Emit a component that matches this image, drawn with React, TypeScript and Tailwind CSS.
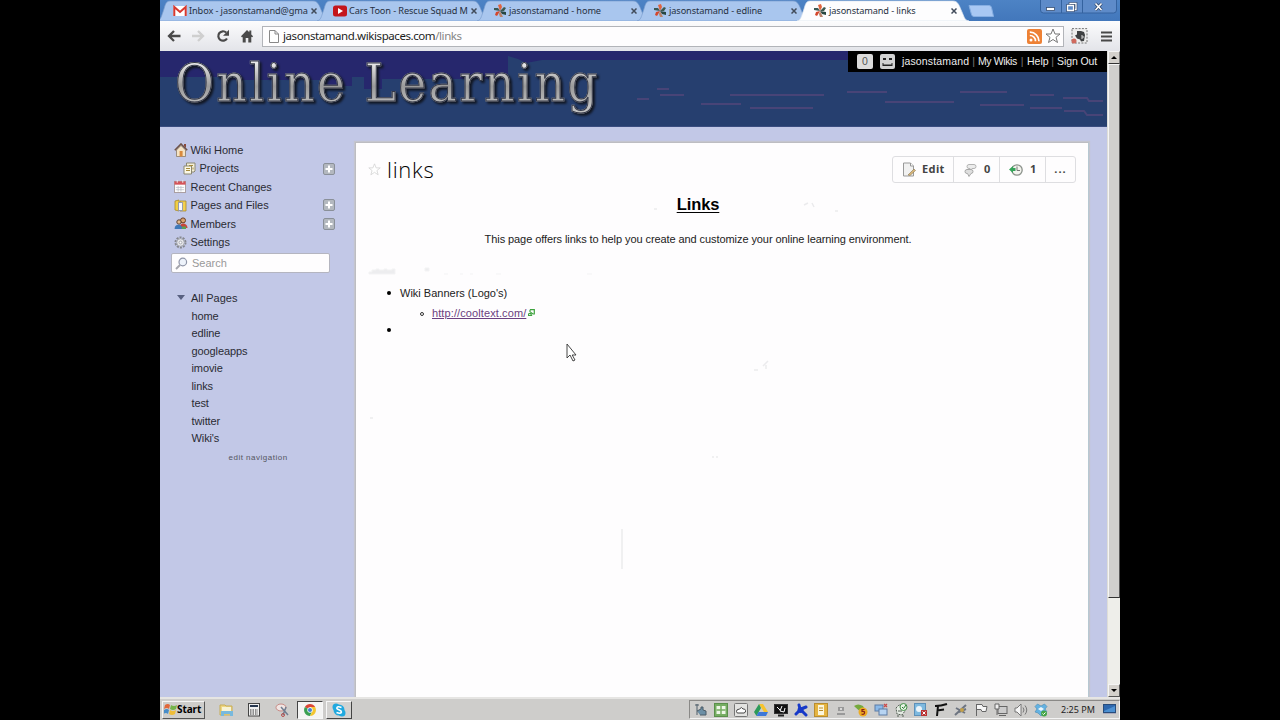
import type { ReactNode } from 'react'

interface TabProps {
    title: string
    icon: ReactNode
    active?: boolean
}

// Icons
const PinwheelIcon = () => (
    <svg className="h-[14px] w-[14px] shrink-0" viewBox="0 0 14 14">
        <path d="M7 7 5 1l3-1 1 3Z" fill="#e0653f" />
        <path d="M7 7l4-4 2 1-2 3Z" fill="#3c5a50" />
        <path d="M7 7l6 1 0 3-4-1Z" fill="#27463f" />
        <path d="M7 7l3 6-3 0-1-3Z" fill="#b9826a" />
        <path d="M7 7l-3 5-2-1 1-3Z" fill="#d4472c" />
        <path d="M7 7 1 6l0-2 4 0Z" fill="#3a5a55" />
    </svg>
)

const GmailIcon = () => (
    <svg className="h-[14px] w-[14px] shrink-0" viewBox="0 0 14 14">
        <rect x="0.5" y="2" width="13" height="10" fill="#fff" />
        <path d="M1.3 12V3l5.7 5 5.7-5v9" fill="none" stroke="#d8392f" strokeWidth="2" />
    </svg>
)

const YoutubeIcon = () => (
    <svg className="h-[14px] w-[14px] shrink-0" viewBox="0 0 14 14">
        <rect x="0" y="1.5" width="14" height="11" rx="2.5" fill="#c4161c" />
        <path d="M5 4v6l5-3Z" fill="#fff" />
    </svg>
)

const HouseIcon = () => (
    <svg className="h-[14px] w-[14px]" viewBox="0 0 14 14">
        <path d="M2.5 7v6.5h9V7L7 2.5Z" fill="#f4e3c4" stroke="#8a7a66" strokeWidth="0.8" />
        <path d="M10 1h2v4l-2-2Z" fill="#8a4a3a" />
        <path d="M.8 7.3 7 1l6.2 6.3" fill="none" stroke="#6e5348" strokeWidth="1.6" />
        <rect x="5.6" y="8" width="3" height="5.5" fill="#d98a3d" />
    </svg>
)

const ProjectsIcon = () => (
    <svg className="h-[13px] w-[13px]" viewBox="0 0 13 13">
        <path d="M3.5 1h8.5v8l-1 1H3.5Z" fill="#f3efd9" stroke="#8b8770" />
        <path d="M1 4h7.5v8H1Z" fill="#fbf8e6" stroke="#8b8770" />
        <path d="M3 6.5h4M3 8.5h4M6 3.5h4M10 5.5v2" stroke="#a98d3d" />
    </svg>
)

const CalendarIcon = () => (
    <svg className="h-[13px] w-[12px]" viewBox="0 0 13 14">
        <rect x="0.5" y="1.5" width="12" height="12" fill="#fdfdfd" stroke="#a69a9c" />
        <rect x="0.5" y="1.5" width="12" height="3.5" fill="#d4535a" />
        <path d="M3.5 0v3M9.5 0v3" stroke="#eee" />
        <path d="M2 8h9M2 10.5h9M4.5 6.5v6M7.5 6.5v6" stroke="#b9bcc4" strokeWidth="0.8" />
    </svg>
)

const FilesIcon = () => (
    <svg className="h-[13px] w-[13px]" viewBox="0 0 13 13">
        <path d="M1 2l4-1v11l-4-1Z" fill="#f0cf45" stroke="#a98c28" strokeWidth="0.8" />
        <path d="M6 2h6v10H6Z" fill="#f3d050" stroke="#a98c28" strokeWidth="0.8" />
        <path d="M4.5 3.5h4v8h-4Z" fill="#f7f8fd" stroke="#7f8bb0" strokeWidth="0.8" />
    </svg>
)

const MembersIcon = () => (
    <svg className="h-[13px] w-[14px]" viewBox="0 0 14 13">
        <circle cx="9" cy="3.4" r="2.5" fill="#d9a273" stroke="#6b3f22" strokeWidth="1" />
        <path d="M5.5 11c0-3 1.5-4.5 3.7-4.5S13.5 8 13.5 11Z" fill="#c8443a" />
        <circle cx="5" cy="5" r="2.2" fill="#e5b98c" stroke="#5a4030" strokeWidth="1" />
        <path d="M.6 12c0-3 1.6-4.3 3.8-4.3S8.3 9 8.3 12Z" fill="#3f78b8" />
        <path d="M8 9.5h4v2.5H8Z" fill="#5aa05a" />
    </svg>
)

const GearIcon = () => (
    <svg className="h-[13px] w-[13px]" viewBox="0 0 13 13">
        <circle cx="6.5" cy="6.5" r="5" fill="none" stroke="#85878d" strokeWidth="2" strokeDasharray="2 1.14" />
        <circle cx="6.5" cy="6.5" r="3.8" fill="#e4e5e9" stroke="#9a9da3" strokeWidth="0.8" />
        <circle cx="6.5" cy="6.5" r="1.4" fill="#fbfbfd" stroke="#9a9da3" strokeWidth="0.8" />
    </svg>
)

const SearchIcon = () => (
    <svg className="h-[13px] w-[13px]" viewBox="0 0 13 13">
        <path d="M1 12l4-4" stroke="#a6a6ae" strokeWidth="2" />
        <circle cx="7.8" cy="5" r="3.8" fill="#eef3fb" stroke="#8f95a8" strokeWidth="1.2" />
    </svg>
)

const PlusButton = () => (
    <svg className="h-3 w-3" viewBox="0 0 12 12">
        <rect x="0.5" y="0.5" width="11" height="11" rx="1.5" fill="#b3b8bf" stroke="#8a9099" />
        <path d="M6 2.5v7M2.5 6h7" stroke="#fff" strokeWidth="2" />
    </svg>
)

const WindowButtons = () => (
    <svg className="h-[14px] w-[77px]" viewBox="0 0 77 14">
        <path d="M.5 0v10q0 3 3 3h70q3 0 3-3V0" fill="#5e8bc9" stroke="#34629f" />
        <path d="M21.5 0v13M42.5 0v13" stroke="#34629f" />
        <rect x="6.5" y="7.5" width="8" height="3" fill="#fff" stroke="#3a4f72" strokeWidth="0.8" />
        <path d="M30 3.5h6v6h-6Z" fill="none" stroke="#2c4265" strokeWidth="2.6" />
        <path d="M30 3.5h6v6h-6Z" fill="none" stroke="#fff" strokeWidth="1.3" />
        <path d="M27.5 5.5h6v5h-6Z" fill="#5e8bc9" stroke="#2c4265" strokeWidth="2.6" />
        <path d="M27.5 5.5h6v5h-6Z" fill="#5e8bc9" stroke="#fff" strokeWidth="1.3" />
        <path d="M55.5 3.5l6 6.5M61.5 3.5l-6 6.5" stroke="#2c4265" strokeWidth="3" />
        <path d="M55.5 3.5l6 6.5M61.5 3.5l-6 6.5" stroke="#fff" strokeWidth="1.6" />
    </svg>
)

const StarIcon = ({ className }: { className: string }) => (
    <svg className={className} viewBox="0 0 16 16" fill="#fff" stroke="currentColor" strokeLinejoin="round">
        <path d="M8 1l2 5h5l-4 3.3 1.5 5.2L8 11.5l-4.5 3L5 9.3 1 6h5Z" />
    </svg>
)

const RssIcon = () => (
    <svg className="h-[15px] w-[15px]" viewBox="0 0 15 15">
        <rect width="15" height="15" rx="2" fill="#ee8135" />
        <circle cx="4" cy="11" r="1.5" fill="#fff" />
        <path d="M2.8 6.5a5.5 5.5 0 0 1 5.7 5.8M2.8 3.2a9 9 0 0 1 9.2 9.1" fill="none" stroke="#fff" strokeWidth="1.7" />
    </svg>
)

const EvernoteIcon = () => (
    <svg className="h-[16px] w-[17px]" viewBox="0 0 17 16">
        <rect x="1" y="0.6" width="15" height="14.4" fill="#eee" stroke="#777" strokeDasharray="2 1.3" />
        <path d="M6 3h4l3 1 1 3-1 6-3 .5-1-2-3-1-2-3 2-1Z" fill="#3f4143" />
        <path d="M10 8h2v2h-2" fill="none" stroke="#d8d8d8" />
        <circle cx="3" cy="13" r="2.5" fill="#d06a5e" />
    </svg>
)

const ToolbarNav = () => (
    <svg className="h-[14px] w-[88px]" viewBox="0 0 88 14">
        <path d="M14.500 7H3M8 2 3 7l5 5" fill="none" stroke="#4a4a4a" strokeWidth="2.300" />
        <path d="M26 7h11M32 2l5 5-5 5" fill="none" stroke="#cfcfcf" strokeWidth="2.300" />
        <path d="M61 9.5a4.700 4.700 0 1 1-.8-6" fill="none" stroke="#4a4a4a" strokeWidth="2.200" />
        <path d="M63 .8v6h-6Z" fill="#4a4a4a" />
        <path d="M75 7.300 81 1l2.300 2.300V1.500h2v4l1.800 1.800-1 1-.8-.5V13.500h-3V9h-2.600v4.500h-3V7.800l-.6.6Z" fill="#4a4a4a" />
    </svg>
)

const Tab = ({ title, icon, active }: TabProps) => (
    <div className="relative flex h-[21px] w-[160px] shrink-0 items-center pl-[13px] pt-[1px]">
        <svg className="absolute -left-[4px] top-0 h-[21px] w-[174px]" viewBox="0 0 174 21">
            <path
                d="M1 21C5 20 5 17 7 12S9 1 14 1H157C162 1 163 5 166 12S169 20 173 21Z"
                fill={active ? '#fdfdfe' : '#a9c6ee'}
                stroke={active ? '#d8e2ef' : '#7c9fce'}
                strokeWidth="0.7"
            />
        </svg>
        <div className="relative flex items-center">
            {icon}
            <span className="ml-[2px] w-[119px] whitespace-nowrap font-['Noto_Sans','Liberation_Sans',sans-serif] text-[9.2px] leading-4 tracking-[-0.1px] text-[#26303f]">
                {title}
            </span>
            <svg className="ml-[3px] h-[6px] w-[6px]" viewBox="0 0 6 6">
                <path d="M.5.5l5 5M5.5.5l-5 5" stroke="#424c5b" strokeWidth="1.500" />
            </svg>
        </div>
    </div>
)

const TabStrip = () => (
    <div className="flex h-[21px] justify-between overflow-hidden bg-linear-to-b from-[#4d83c5] to-[#4277bb]">
        <div className="flex">
            <Tab title="Inbox - jasonstamand@gma" icon={<GmailIcon />} />
            <Tab title="Cars Toon - Rescue Squad M" icon={<YoutubeIcon />} />
            <Tab title="jasonstamand - home" icon={<PinwheelIcon />} />
            <Tab title="jasonstamand - edline" icon={<PinwheelIcon />} />
            <Tab title="jasonstamand - links" icon={<PinwheelIcon />} active />
            <svg className="ml-[8px] mt-[5px] h-[12px] w-[26px]" viewBox="0 0 26 12">
                <path d="M1 .5h20q2 0 2.5 2l2 9H6q-2 0-2.5-2Z" fill="#a9c8f3" stroke="#86aee2" />
            </svg>
        </div>
        <div className="pr-[3px]">
            <WindowButtons />
        </div>
    </div>
)

const AddressBar = () => (
    <div className="flex h-[30px] items-center bg-linear-to-b from-[#fcfcfd] to-[#e3e4e9] pl-[6px]">
        <ToolbarNav />
        <div className="ml-[8px] flex h-[21px] w-[802px] items-center border border-[#b2b4b9] bg-[#fefdfe] pl-[6px]">
            <svg className="h-[13px] w-[10px]" viewBox="0 0 10 13">
                <path d="M.5.5h5.5l3.5 3.5v8.500h-9ZM6 .5V4h3.500" fill="#fff" stroke="#888" />
            </svg>
            <span className="ml-[4px] whitespace-nowrap font-['Noto_Sans',sans-serif] text-[11.5px] tracking-[-0.420px] text-[#1d1d1d]">
                jasonstamand.wikispaces.com<span className="text-[#858585]">/links</span>
            </span>
            <div className="ml-auto flex items-center gap-[3px] pr-[2px]">
                <RssIcon />
                <StarIcon className="h-[16px] w-[16px] text-[#777]" />
            </div>
        </div>
        <div className="ml-[7px] mt-[-1px]">
            <EvernoteIcon />
        </div>
        <svg className="ml-[13px] h-[11px] w-[11px]" viewBox="0 0 11 11">
            <path d="M0 1.5h11M0 5.5h11M0 9.5h11" stroke="#484848" strokeWidth="2.2" />
        </svg>
    </div>
)

const Banner = () => (
    <header className="relative h-[76px] w-full shrink-0 overflow-hidden border-b border-[#3a4d80] bg-[#263f6f]">
        <svg className="absolute inset-0 h-[75px] w-[947px]" viewBox="0 0 947 75">
            <path d="M0 0H688V9H382L366 12 358 8 348 5V28H222V38H204V26H192V35H160V29H66V26H0Z" fill="#26276d" />
            <path
                d="M497 38h12M477 48h12M500 44h24M570 44h94M541 53h40M590 57h63M687 41h40M725 51h69M800 41h47M820 54h44M870 44h24M870 57h32M903 47h24l2 3h14M904 60h20l3 4h16"
                fill="none"
                stroke="#484477"
                strokeWidth="2"
            />
        </svg>
        <h1 className="relative ml-[15px] mt-[-1px] w-fit whitespace-nowrap bg-linear-to-b from-[#e8e8e8] from-20% via-[#9a9a9a] via-55% to-[#c0c0c0] to-85% bg-clip-text font-['DejaVu_Serif_Condensed','DejaVu_Serif',serif] text-[53px] leading-[66px] tracking-[2.150px] text-transparent drop-shadow-[2px_2px_1px_#111622] [-webkit-text-stroke:1px_#343848] [font-stretch:75%]">
            Online Learning
        </h1>
        <div className="absolute right-0 top-0 flex h-[21px] w-[259px] items-center bg-black pl-[9px] font-['Liberation_Sans',sans-serif] text-[10.5px] text-[#eeeeee]">
            <span className="flex h-[15px] w-[16px] items-center justify-center rounded-[2px] bg-[#dcdcdc] text-[#555]">0</span>
            <svg className="ml-[7px] h-[15px] w-[15px]" viewBox="0 0 15 15">
                <rect width="15" height="15" rx="2" fill="#d2d2d2" />
                <path d="M3 4h3v2H3ZM9 4h3v2H9ZM2.5 9h1v1.5h8V9h1v3h-10Z" fill="#222" />
            </svg>
            <div className="ml-[7px] flex whitespace-nowrap">
                <span className="w-[67px] tracking-[0.15px]">jasonstamand</span>
                <span className="w-[9px] text-center text-[#777]">|</span>
                <span className="w-[39px] tracking-[-0.4px]">My Wikis</span>
                <span className="w-[10px] text-center text-[#777]">|</span>
                <span className="w-[21px]">Help</span>
                <span className="w-[9px] text-center text-[#777]">|</span>
                <span className="tracking-[-0.1px]">Sign Out</span>
            </div>
        </div>
    </header>
)

const navItems = [
    { label: 'Wiki Home', icon: <HouseIcon /> },
    { label: 'Projects', icon: <ProjectsIcon />, nested: true, addable: true },
    { label: 'Recent Changes', icon: <CalendarIcon /> },
    { label: 'Pages and Files', icon: <FilesIcon />, addable: true },
    { label: 'Members', icon: <MembersIcon />, addable: true },
    { label: 'Settings', icon: <GearIcon /> },
]

const pages = ['home', 'edline', 'googleapps', 'imovie', 'links', 'test', 'twitter', "Wiki's"]

const Sidebar = () => (
    <nav className="w-[195px] shrink-0 pl-[11px] pt-[14px] text-[11px] text-[#2a2b33]">
        <ul>
            {navItems.map(item => (
                <li key={item.label} className={`flex h-[18.4px] w-[164px] items-center ${item.nested ? 'pl-[12px]' : 'pl-[3px]'}`}>
                    <span className="flex w-[16.5px] shrink-0">{item.icon}</span>
                    <span className="tracking-[-0.05px]">{item.label}</span>
                    {item.addable && (
                        <span className="ml-auto">
                            <PlusButton />
                        </span>
                    )}
                </li>
            ))}
        </ul>
        <div className="mt-[2px] flex h-[20px] w-[159px] items-center rounded-[2px] border border-[#b4b5c0] bg-[#fefdfe] pl-[3px]">
            <SearchIcon />
            <span className="ml-[4px] text-[#999]">Search</span>
        </div>
        <div className="mt-[16px] flex h-[17px] items-center pl-[6px]">
            <svg className="h-[5px] w-[8px]" viewBox="0 0 8 5">
                <path d="M0 0h8L4 5Z" fill="#586080" />
            </svg>
            <span className="ml-[6px]">All Pages</span>
        </div>
        <ul className="mt-px pl-[20.5px] tracking-[-0.1px]">
            {pages.map(page => (
                <li key={page} className="flex h-[17.5px] items-center">
                    {page}
                </li>
            ))}
        </ul>
        <div className="mt-[5px] pl-[57.5px] text-[8px] leading-[12px] tracking-[0.5px] text-[#55565f]">edit navigation</div>
    </nav>
)

const PageActions = () => (
    <div className="-mt-px flex h-[27px] items-stretch divide-x divide-[#dedee1] rounded-[3px] border border-[#dedee1] font-['Noto_Sans','Liberation_Sans',sans-serif] text-[11px] font-bold text-[#444]">
        <div className="flex w-[61px] items-center pl-[9px]">
            <svg className="h-[15px] w-[14px]" viewBox="0 0 14 15">
                <path d="M1.5 1h7l3 3v10h-10Z" fill="#f1f1f1" stroke="#999" />
                <path d="M8.5 1v3h3" fill="#fff" stroke="#999" />
                <path d="M6 13l6-6 1.5 1.5-5.5 5Z" fill="#d9b77a" stroke="#8a7753" strokeWidth="0.6" />
            </svg>
            <span className="ml-[6px] tracking-[0.4px]">Edit</span>
        </div>
        <div className="flex w-[46px] items-center pl-[9px]">
            <svg className="h-[14px] w-[14px]" viewBox="0 0 14 14">
                <path d="M6 1.5h5q2 0 2 2t-2 2H9L7 8V5.5H6q-2 0-2-2t2-2Z" fill="#ececec" stroke="#b4b4b4" />
                <path d="M4 6.5h4q2 0 2 2t-2 2l-2 3-1.5-3H4q-2 0-2-2t2-2Z" fill="#dedede" stroke="#a8a8a8" />
            </svg>
            <span className="ml-[7px]">0</span>
        </div>
        <div className="flex w-[46px] items-center pl-[9px]">
            <svg className="h-[14px] w-[14px]" viewBox="0 0 14 14">
                <circle cx="8" cy="7" r="5.2" fill="#f4f4ef" stroke="#8b928b" strokeWidth="1.3" />
                <path d="M8 3.5V7.5h3" fill="none" stroke="#777" />
                <path d="M0 6.5 4 3v2h2.5v3H4v2Z" fill="#36a45a" />
            </svg>
            <span className="ml-[7px]">1</span>
        </div>
        <div className="flex w-[29px] items-center justify-center tracking-[1px]">...</div>
    </div>
)

const WikiPage = () => (
    <main className="relative mt-[15px] w-[734px] shrink-0 border border-b-0 border-[#bdbdc2] border-r-[#b7c8d2] bg-[#fefdfe] text-[11px] text-[#222] shadow-[0_0_1px_1px_#c4c5cf]">
        <div className="flex items-start justify-between pl-[12px] pr-[12px] pt-[14px]">
            <div className="-mt-px flex items-center">
                <StarIcon className="h-[13px] w-[13px] text-[#d4d4d4]" />
                <h2 className="ml-[6px] font-['Open_Sans','Noto_Sans',sans-serif] text-[22px] font-light leading-[27px] tracking-[0.700px] text-black">links</h2>
            </div>
            <PageActions />
        </div>
        <h3 className="mt-[11px] pr-[48px] text-center text-[16.5px] font-bold leading-[20px] tracking-[-0.1px] text-black underline decoration-1 underline-offset-2">Links</h3>
        <p className="mt-[17px] pr-[48px] text-center leading-[16px] tracking-[-0.080px]">
            This page offers links to help you create and customize your online learning environment.
        </p>
        <svg className="ml-[12px] mt-[18px] h-[14px] w-[260px]" viewBox="0 0 260 14">
            <path d="M1 9V7h3V5h4V4h3v1h5V4h3v1h5V4h3v5ZM57 3h4v3h-4ZM76 9h4M92 9h3M102 9h3M128 9h5M219 9h5" fill="#ededef" stroke="#f3f3f4" />
        </svg>
        <ul className="mt-[4px] pl-[31px]">
            <li className="flex h-[20px] items-center gap-[9px]">
                <span className="h-[4px] w-[4px] rounded-full bg-black" />
                <span>Wiki Banners (Logo's)</span>
            </li>
            <li className="flex h-[21px] items-center pl-[33px]">
                <span className="h-[4px] w-[4px] rounded-full border border-[#333]" />
                <span className="ml-[8px] tracking-[0.1px] text-[#6b3f80] underline">http://cooltext.com/</span>
                <svg className="ml-[2px] mt-[-2px] h-[8px] w-[7px]" viewBox="0 0 7 8">
                    <path d="M2 .7h4.300V5H5L3 3.500 2 5M2 .7V3M.5 5l2-1 1 2.500H.5Z" fill="none" stroke="#3fa33f" strokeWidth="1.200" />
                </svg>
            </li>
            <li className="flex h-[11px] items-center">
                <span className="h-[4px] w-[4px] rounded-full bg-black" />
            </li>
        </ul>
        <svg className="absolute left-[210px] top-[200px] h-[20px] w-[12px]" viewBox="0 0 12 20">
            <path d="M1 1v14l3-3 3 6 2-1-2.8-5H10Z" fill="#fff" stroke="#333" strokeWidth="0.9" />
        </svg>
        <svg className="absolute left-[12px] top-[56px] h-[375px] w-[480px]" viewBox="0 0 480 375">
            <path d="M286 10h3M436 6l4-2M444 4l2 4M467 12h3M386 171h4M395 167l5-5M398 170v-4M2 219h3M344 258h2M348 258h2M254 330v40" fill="none" stroke="#ebebed" strokeWidth="1.5" />
        </svg>
    </main>
)

const Scrollbar = () => (
    <div className="flex w-[13px] shrink-0 flex-col border-l border-[#deded8] bg-[#ecece6]">
        <div className="flex h-[13px] items-center justify-center border border-[#f5f5f5] border-b-[#333] border-r-[#777] bg-[#d4d1cc]">
            <svg className="h-[3px] w-[6px]" viewBox="0 0 6 3">
                <path d="M0 3h6L3 0Z" fill="#000" />
            </svg>
        </div>
        <div className="h-[534px] border border-[#f5f5f5] border-b-[#333] border-r-[#555] bg-[#d0cfcd]" />
        <div className="flex-1 bg-[#eeeeea]" />
        <div className="flex h-[13px] items-center justify-center border border-[#f5f5f5] border-b-[#555] border-r-[#555] bg-[#d4d1cc]">
            <svg className="h-[3px] w-[6px]" viewBox="0 0 6 3">
                <path d="M0 0h6L3 3Z" fill="#000" />
            </svg>
        </div>
    </div>
)

// Notification area glyphs, each drawn in a 14x14 box
const trayIcons: ReactNode[] = [
    <><path d="M3 1v11M1 2h4M3 8l4-2v-2h2v3l3 1v4H6" fill="#6c8fa5" stroke="#4c5d68" /></>,
    <><rect x="0.5" y="0.5" width="13" height="13" fill="#75ad62" stroke="#5a8f4b" /><rect x="2.5" y="3" width="9" height="8" fill="#eef6e7" /><path d="M7 3v8M2.5 7h9" stroke="#75ad62" strokeWidth="1.5" /></>,
    <><rect x="0.5" y="0.5" width="13" height="13" rx="1" fill="#e3e3e1" stroke="#777" /><path d="M4 10h6q2-.5 1.5-2.5T9 6Q7.5 3 5.5 6 2 6.5 2.5 8.5T4 10Z" fill="#fff" stroke="#444" /></>,
    <><path d="M5 1h4l5 8h-4Z" fill="#f6c32d" /><path d="M5 1l2 4-4.5 8L0 9Z" fill="#2d9a59" /><path d="M4.5 9H14l-2 4H2.5Z" fill="#3d78d8" /></>,
    <><rect x="0.5" y="1.5" width="13" height="9" fill="#111" stroke="#333" /><path d="M3 4l3 3M8 3l-2 5 4 1 1-4" fill="none" stroke="#fff" /><path d="M4 12.5h6" stroke="#222" strokeWidth="2" /></>,
    <><circle cx="6.5" cy="7" r="3" fill="#1739c8" /><path d="M6 6 5 2M7 6l5-2M8 8l4 4M5 8l-3 3" stroke="#1739c8" strokeWidth="3" strokeLinecap="round" /></>,
    <><rect x="0.5" y="0.5" width="13" height="13" fill="#e5b440" stroke="#b98d2f" /><rect x="4" y="2" width="6" height="10" fill="#fbf6de" /><path d="M5 5h4M5 7.5h4" stroke="#b98d2f" /></>,
    <><path d="M4 4h6v4H4ZM3 10h8v2H3Z" fill="#999" /><circle cx="7" cy="6" r="1" fill="#eee" /></>,
    <><path d="M0 3q4-3 9 0l2 4-4 2Q3 6 0 3Z" fill="#75a93d" /><circle cx="9" cy="9" r="4.5" fill="#edab23" /><path d="M10.5 6.5H8v2q3-.5 2.5 1.5T7.5 11" fill="none" stroke="#8a2418" strokeWidth="1.2" /></>,
    <><rect x="1" y="2" width="8" height="6" fill="#8bb9e8" stroke="#5c7ca6" /><rect x="5" y="6" width="8" height="6" fill="#b7d4f2" stroke="#5c7ca6" /><path d="M10 1l3 3M13 1l-3 3" stroke="#c94b4b" strokeWidth="1.3" /></>,
    <><path d="M2 5l3-3 5 1 1 5-3 4-5-1Z" fill="#e5ebe3" stroke="#556055" strokeDasharray="2 1" /><path d="M3 13h2M8 13h2M4 8h4" stroke="#556055" /><circle cx="9.5" cy="4" r="3.5" fill="#e8f3e5" stroke="#449148" /><path d="M8 4l1.5 1.5L12 2" fill="none" stroke="#267c30" /></>,
    <><rect x="0.5" y="0.5" width="11" height="12" fill="#7eb9df" stroke="#5d90b9" /><circle cx="5" cy="6" r="3" fill="#ecf4fa" /><rect x="7" y="7" width="6" height="6" fill="#b83232" /><path d="M8.5 8.5l3 3M11.5 8.5l-3 3" stroke="#fff" /></>,
    <><path d="M1 3q6 0 12-2M4 3 3 13M3 7.5l7-1" fill="none" stroke="#111" strokeWidth="2" /></>,
    <><path d="M1 12 12 2M2 5l9 5M5 9l7-3" stroke="#6d7480" strokeWidth="2" /><circle cx="8" cy="7" r="2" fill="#c5a14a" /></>,
    <><path d="M2.5 13V1M3 1.5h5l1 2h4l-1 5H8l-1-2H3" fill="#f6f6f6" stroke="#666" /></>,
    <><rect x="4" y="3.5" width="9" height="7" fill="#ccc" stroke="#666" /><path d="M1 1h4v5H1ZM5 12.5h7M3 6v6" fill="#eee" stroke="#666" /></>,
    <><path d="M1 5h2l4-4v12l-4-4H1Z" fill="#f6f6f6" stroke="#777" /><path d="M9 4.5q2 2.5 0 5M11 2.5q3.5 4.5 0 9" fill="none" stroke="#777" /></>,
    <><path d="M3.5 1 7 3l3.5-2L13 3.5 11 6l2 3-3 1-3 3-3-3-3-1 2-3-2-2.5Z" fill="#64b2e2" stroke="#4888b0" strokeWidth="0.6" /><path d="M7 4 4 6l3 2 3-2Z" fill="#eaf6fc" /><circle cx="10" cy="10.5" r="3" fill="#45a648" /><path d="M8.5 10.5l1 1 2-2" fill="none" stroke="#fff" /></>,
]

const Taskbar = () => (
    <footer className="flex h-[23px] items-center border-t-2 border-[#e6e5e3] bg-[#cecdcb]">
        <div className="ml-[2px] flex h-[18px] w-[43px] items-center border border-[#f4f4f4] border-b-[#555] border-r-[#555] pl-px">
            <svg className="h-[13px] w-[13px] shrink-0" viewBox="0 0 13 13">
                <path d="M1 2q3-2 5 0L5 6Q3 4 0 6Z" fill="#e1673a" />
                <path d="M7 2q3 2 6 0l-1 4q-3 2-6 0Z" fill="#75b44a" />
                <path d="M0 7q3-2 5 0l-1 4q-2-2-5 0Z" fill="#478cc8" />
                <path d="M6 7q3 2 6 0l-1 4q-3 2-6 0Z" fill="#efbd37" />
            </svg>
            <span className="font-['Noto_Sans',sans-serif] text-[10px] font-bold tracking-[-0.1px] text-black">Start</span>
        </div>
        <svg className="ml-[14px] h-[14px] w-[15px]" viewBox="0 0 15 14">
            <path d="M1 2h5l1 1h6v9H1Z" fill="#efd780" stroke="#c7ac57" />
            <path d="M3 4h9v4H3Z" fill="#f8f3d4" />
            <path d="M2 8h12v5h-3v-2H5v2H2Z" fill="#78b9dd" />
        </svg>
        <svg className="ml-[14px] h-[14px] w-[12px]" viewBox="0 0 12 14">
            <rect x="0.5" y="0.5" width="11" height="12.5" fill="#efefef" stroke="#444" />
            <path d="M2 3h8" stroke="#26364f" strokeWidth="2" />
            <path d="M2 7h8M2 9h8M2 11h8" stroke="#333" strokeDasharray="1.5 1" />
        </svg>
        <svg className="ml-[15px] h-[14px] w-[15px]" viewBox="0 0 15 14">
            <ellipse cx="6" cy="4.5" rx="5" ry="3.5" fill="#f0e5e3" stroke="#c88b86" />
            <path d="M6 4l7 8M11 4l-3 8" stroke="#6f7e91" strokeWidth="1.5" />
            <circle cx="8" cy="12" r="1.5" fill="none" stroke="#b65050" />
        </svg>
        <div className="ml-[7px] flex h-[18px] w-[26px] items-center justify-center border border-[#444] border-b-[#f7f7f7] border-r-[#f7f7f7] bg-[#f4f4f3]">
            <svg className="h-[12px] w-[12px]" viewBox="0 0 14 14">
                <path d="M7 7 1 3.5A7 7 0 0 1 13 3.5H7Z" fill="#dc4635" />
                <path d="M7 7h3l-3 7A7 7 0 0 1 1 3.5Z" fill="#3a9f51" />
                <path d="M7 3.5h6A7 7 0 0 1 7 14l3-6Z" fill="#f4c62f" />
                <circle cx="7" cy="7" r="3.1" fill="#fff" />
                <circle cx="7" cy="7" r="2.4" fill="#4580d3" />
            </svg>
        </div>
        <div className="ml-[3px] flex h-[18px] w-[26px] items-center justify-center border border-[#f7f7f7] border-b-[#444] border-r-[#444] bg-[#d3d2d0]">
            <svg className="h-[14px] w-[14px]" viewBox="0 0 14 14">
                <circle cx="7" cy="7" r="5.5" fill="#20a9df" />
                <circle cx="4" cy="4" r="3.5" fill="#20a9df" />
                <circle cx="10" cy="10" r="3.5" fill="#20a9df" />
                <path d="M9.5 4.5Q5 2.8 4.8 5.2C4.8 7 9.5 6.5 9.4 9Q9 11.2 4.5 9.5" fill="none" stroke="#fff" strokeWidth="1.6" />
            </svg>
        </div>
        <div className="ml-auto flex h-[19px] items-center border border-[#8a8987] border-b-[#f4f4f4] border-r-[#f4f4f4] pl-[4px]">
            <div className="flex gap-[6px]">
                {trayIcons.map((icon, i) => (
                    <svg key={i} className="h-[14px] w-[14px]" viewBox="0 0 14 14" fill="none">
                        {icon}
                    </svg>
                ))}
            </div>
            <span className="ml-[13px] w-[34px] whitespace-nowrap font-['Noto_Sans',sans-serif] text-[9px] text-[#222]">2:25 PM</span>
            <svg className="ml-[8px] mr-[3px] h-[11px] w-[13px]" viewBox="0 0 13 11">
                <rect x="0.5" y="0.5" width="12" height="8" fill="#2e68ae" stroke="#294d7b" />
                <path d="M0 9.5h13" stroke="#aab" />
                <path d="M1 7 12 2v6H1Z" fill="#4d91d2" />
            </svg>
        </div>
    </footer>
)

export default function App() {
    return (
        <div className="flex h-[720px] w-[1280px] justify-center overflow-hidden bg-black font-['Liberation_Sans',Arial,sans-serif]">
            <div className="flex w-[960px] flex-col">
                <TabStrip />
                <AddressBar />
                <div className="flex h-[646px] overflow-hidden">
                    <div className="flex w-[947px] shrink-0 flex-col bg-[#c2c8e7]">
                        <Banner />
                        <div className="flex min-h-0 flex-1">
                            <Sidebar />
                            <WikiPage />
                        </div>
                    </div>
                    <Scrollbar />
                </div>
                <Taskbar />
            </div>
        </div>
    )
}
